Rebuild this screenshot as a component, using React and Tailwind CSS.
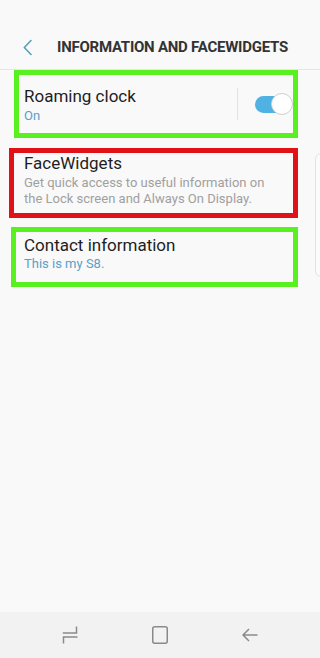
import React from "react";

export default function App() {
  const font = { fontFamily: "Roboto, 'Noto Sans', sans-serif" };
  return (
    <div
      className="relative w-[320px] h-[658px] bg-[#f9f9f9] flex flex-col overflow-hidden"
      style={font}
    >
      {/* status bar */}
      <div className="h-[26px] shrink-0" />

      {/* header */}
      <div className="h-[44px] shrink-0 flex items-center border-b border-[#e6e6e6]">
        <div className="w-[57px] pl-[22px] flex items-center">
          <svg width="11" height="17" viewBox="0 0 11 17" fill="none">
            <path d="M9 1.5 L2.3 8.5 L9 15.5" stroke="#5a9fb8" strokeWidth="1.6" strokeLinecap="round" strokeLinejoin="round" />
          </svg>
        </div>
        <div className="text-[15px] font-bold text-[#333333] tracking-[-0.25px] leading-none">
          INFORMATION AND FACEWIDGETS
        </div>
      </div>

      {/* list */}
      <div className="flex flex-col">
        {/* Roaming clock */}
        <div className="ml-[14px] w-[284px] h-[68px] border-[5px] border-[#58f01e] flex items-center pl-[5px]">
          <div className="flex-1 self-start pt-[11px]">
            <div className="text-[17px] leading-[20px] text-[#1e1e1e]">Roaming clock</div>
            <div className="mt-[2px] text-[13px] leading-[16px] text-[#5a9fc8]">On</div>
          </div>
          <div className="w-px h-[32px] bg-[#e2e2e2]" />
          <div className="ml-[17px] relative w-[38px] h-[22px] flex items-center">
            <div className="w-[34px] h-[17px] rounded-full bg-[#4fb2e2]" />
            <div className="absolute right-0 top-0 w-[22px] h-[22px] rounded-full bg-white border border-[#cfcfcf]" />
          </div>
        </div>

        {/* FaceWidgets */}
        <div className="mt-[10px] ml-[9px] w-[289px] h-[70px] border-[5px] border-[#e01218] pl-[10px] pr-[20px]">
          <div className="text-[17px] leading-[20px] text-[#1e1e1e]">FaceWidgets</div>
          <div className="mt-[2px] text-[13px] leading-[16px] text-[#a0a0a0]">
            Get quick access to useful information on the Lock screen and Always On Display.
          </div>
        </div>

        {/* Contact information */}
        <div className="mt-[9px] ml-[11px] w-[287px] h-[60px] border-[5px] border-[#58f01e] pl-[8px] pt-[3px]">
          <div className="text-[17px] leading-[20px] text-[#1e1e1e]">Contact information</div>
          <div className="mt-[1px] text-[13px] leading-[16px] text-[#5a9fc8]">This is my S8.</div>
        </div>
      </div>

      {/* peeking card on right edge */}
      <div className="absolute left-[315px] top-[153px] w-[14px] h-[124px] rounded-[6px] border border-[#e2e2e2] bg-[#fbfbfb]" />

      {/* nav bar */}
      <div className="mt-auto h-[46px] shrink-0 bg-[#f2f2f2] flex items-center justify-center gap-[74px]">
        <svg width="16" height="18" viewBox="0 0 16 18" fill="none">
          <path d="M0.8 7 H14.5 V0.5" stroke="#8a8a8a" strokeWidth="1.5" />
          <path d="M15.5 11 H1.5 V17.5" stroke="#8a8a8a" strokeWidth="1.5" />
        </svg>
        <svg width="16" height="18" viewBox="0 0 16 18" fill="none">
          <rect x="0.75" y="0.75" width="14.5" height="16.5" rx="2" stroke="#8a8a8a" strokeWidth="1.5" />
        </svg>
        <svg width="16" height="14" viewBox="0 0 16 14" fill="none">
          <path d="M7 1 L1 7 L7 13 M1 7 H15.5" stroke="#8a8a8a" strokeWidth="1.5" strokeLinejoin="round" />
        </svg>
      </div>
    </div>
  );
}
